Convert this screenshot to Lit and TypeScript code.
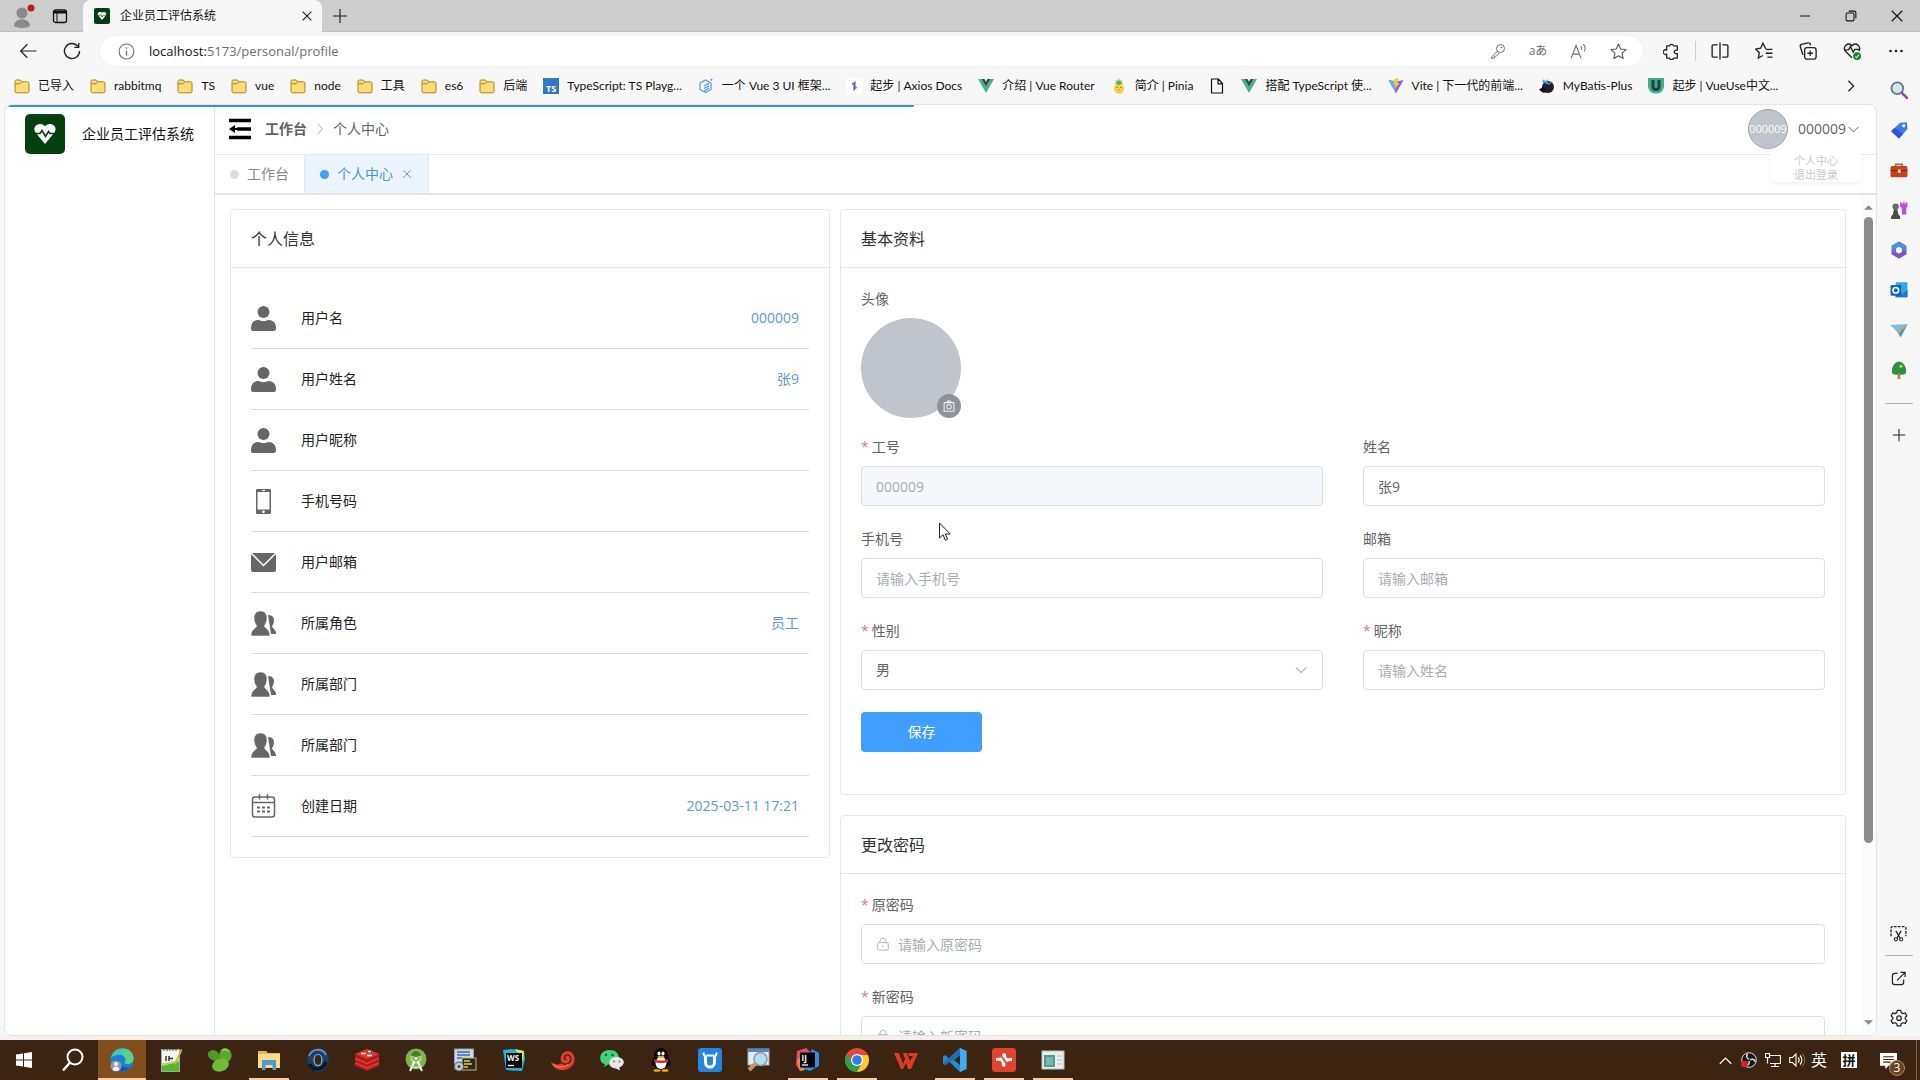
import { LitElement, html, css, svg, nothing, type TemplateResult, type SVGTemplateResult } from "lit";
import { customElement } from "lit/decorators.js";
import { classMap } from "lit/directives/class-map.js";

/* ---------- shared pieces ---------- */

const base = css`
  * { box-sizing: border-box; }
  button { border: 0; padding: 0; margin: 0; background: none; font: inherit; color: inherit; display: flex; align-items: center; justify-content: center; cursor: default; }
  a { color: inherit; text-decoration: none; }
  svg { display: block; flex: none; }
  h1, h2, p, ul, ol { margin: 0; padding: 0; font-weight: 400; list-style: none; }
`;

const icon = (size: number, content: SVGTemplateResult, box = 16) =>
  html`<svg width=${size} height=${size} viewBox="0 0 ${box} ${box}" fill="none" aria-hidden="true">${content}</svg>`;

const heartLogo = svg`<rect width="40" height="40" rx="5" fill="#04400c"/>
  <path d="M20 30 10.500 18.500C7.500 14 11 10 15 10c2.500 0 4 1 5 2.500C21 11 22.500 10 25 10c4 0 7.500 4 4.500 8.500Z" fill="#fff"/>
  <path d="M8 19.500h7l2-3 3.500 6 3-5 1.500 2h7" stroke="#04400c" stroke-width="1.600"/>`;

const plus = svg`<path d="M8 1v14M1 8h14" stroke="#222" stroke-width="1.200"/>`;
const cross = svg`<path d="m3 3 10 10M13 3 3 13" stroke="currentColor" stroke-width="1.200"/>`;

/* ---------- browser frame: tab strip and address bar ---------- */

@customElement("browser-chrome")
class BrowserChrome extends LitElement {
  static styles = [base, css`
    :host { display: block; background: #f7f7f7; font-size: 12px; line-height: 16px; color: #111; }
    .tabs { display: flex; align-items: stretch; height: 32px; background: #cdcdcd; border-bottom: 1px solid #bdbdbd; }
    .lead { display: flex; align-items: center; gap: 16px; width: 83px; padding-left: 12px; }
    .tab { display: flex; align-items: center; width: 239px; height: 32px; padding: 0 8px 0 11px; gap: 10px; background: #f7f7f7; border-radius: 8px 8px 0 0; }
    .tab h1 { flex: 1; font-size: 12px; }
    .new { width: 36px; }
    .window { display: flex; margin-left: auto; }
    .window button { width: 46px; }
    .bar { display: flex; align-items: center; height: 38px; padding-right: 2px; }
    .nav { width: 44px; height: 30px; }
    .nav:first-child { margin-left: 6px; }
    .url { flex: 1; display: flex; align-items: center; height: 30px; margin: 0 6px; padding: 0 15px 0 18px; gap: 14px; background: #fff; border-radius: 15px; color: #6d6d6d; box-shadow: 0 0 2px #e4e4e4; }
    .address { flex: 1; font-family: "Open Sans", sans-serif; font-size: 13px; line-height: 20px; }
    .address b { font-weight: 400; color: #111; }
    .quick { display: flex; gap: 20px; }
    .quick button { width: 20px; }
    .tools { display: flex; align-items: center; }
    .tools button { width: 44px; height: 30px; }
    .sep { width: 1px; height: 20px; margin: 0 2px; background: #d0d0d0; }
  `];

  render() {
    return html`
      <div class="tabs">
        <div class="lead">
          <button aria-label="用户">${icon(24, svg`<circle cx="10" cy="9" r="5.500" fill="#8a8a8a"/><path d="M2 22c0-9 16-9 16 0-3 2.500-13 2.500-16 0Z" fill="#8a8a8a"/><circle cx="19" cy="4" r="3.500" fill="#b81d1d"/>`, 24)}</button>
          <button aria-label="标签页">${icon(16, svg`<rect x="1.500" y="2" width="13" height="12.500" rx="2" stroke="#111" stroke-width="1.300"/><path d="M1.500 3h13v2.500h-13Z" fill="#111"/><path d="M5 5v9" stroke="#111"/>`)}</button>
        </div>
        <div class="tab">${icon(16, heartLogo, 40)}<h1>企业员工评估系统</h1><button aria-label="关闭标签">${icon(14, cross)}</button></div>
        <button class="new" aria-label="新建标签">${icon(16, plus)}</button>
        <div class="window">
          <button aria-label="最小化">${icon(10, svg`<path d="M0 8h16" stroke="#111" stroke-width="1.600"/>`)}</button>
          <button aria-label="还原">${icon(12, svg`<rect x="1.500" y="4" width="10.500" height="10.500" rx="1.500" stroke="#111" stroke-width="1.400"/><path d="M5 1.500h7a2.500 2.500 0 0 1 2.500 2.500v7" stroke="#111" stroke-width="1.400"/>`)}</button>
          <button aria-label="关闭">${icon(14, svg`<path d="m2 2 12 12M14 2 2 14" stroke="#111" stroke-width="1.300"/>`)}</button>
        </div>
      </div>
      <div class="bar">
        <button class="nav" aria-label="后退">${icon(18, svg`<path d="M15.500 8H1.500m6-6-6 6 6 6" stroke="#222" stroke-width="1.100"/>`)}</button>
        <button class="nav" aria-label="刷新">${icon(18, svg`<path d="M13.200 3.800A6.700 6.700 0 1 0 14.700 8M14 .8v4H10" stroke="#222" stroke-width="1.200"/>`)}</button>
        <div class="url">
          ${icon(17, svg`<circle cx="8" cy="8" r="7" stroke="#6d6d6d"/><path d="M8 7v5M8 4v1.500" stroke="#6d6d6d" stroke-width="1.200"/>`)}
          <a class="address" href="#"><b>localhost:</b>5173/personal/profile</a>
          <div class="quick">
            <button aria-label="密码">${icon(16, svg`<circle cx="10.500" cy="5.500" r="4" stroke="#707070"/><path d="m7.500 8-6 6v1.200h2.800v-2h2l3-3.500" stroke="#707070"/><circle cx="11.500" cy="4.500" r=".8" fill="#707070"/>`)}</button>
            <button aria-label="翻译">aあ</button>
            <button aria-label="朗读">${icon(17, svg`<path d="m1 14.500 4.700-12 4.800 12M2.700 10.500h6" stroke="#707070" stroke-width="1.100"/><path d="M10 3c1 1 1.200 2.500.5 3.500M12.500 1c2 2 2 5 .8 7" stroke="#707070"/>`)}</button>
            <button aria-label="收藏">${icon(17, svg`<path d="m8 1 2.100 4.700 5 .5-3.800 3.400 1.100 5L8 12l-4.400 2.600 1.100-5L.9 6.200l5-.5Z" stroke="#555" stroke-linejoin="round"/>`)}</button>
          </div>
        </div>
        <div class="tools">
          <button aria-label="扩展">${icon(17, svg`<path d="M3.500 2.700h2.600a2 2 0 0 1 3.800 0h3.600v4h-.8a1.700 1.700 0 1 0 0 3.300h.8v4.300H9.900a2 2 0 0 1-3.800 0H3.500V10.500a2.200 2.200 0 1 1 0-3.800Z" stroke="#222" stroke-width="1.200" stroke-linejoin="round"/>`)}</button>
          <i class="sep"></i>
          <button aria-label="分屏">${icon(18, svg`<path d="M6 2.500H2c-.6 0-1 .4-1 1v9c0 .6.400 1 1 1h4m4-11h4c.6 0 1 .4 1 1v9c0 .6-.4 1-1 1h-4M8 .5v15" stroke="#222" stroke-width="1.200"/>`)}</button>
          <button aria-label="收藏夹">${icon(18, svg`<path d="M9.500 6 7 1 5 5.500l-4.500.7 3.300 3.300-.8 4.700L7 12M9.500 6.500H15.500M9.500 10H15.500M11 13.500h4.500" stroke="#222" stroke-width="1.200"/>`)}</button>
          <button aria-label="集锦">${icon(18, svg`<rect x="5" y="5" width="10.200" height="10.200" rx="2" stroke="#222" stroke-width="1.200"/><path d="M10 7.500v5M7.500 10h5M3.500 11.500 1.200 4.200c-.3-1 .2-1.800 1-2.100L8 .8c1-.2 1.800.2 2 1l.3 1.200" stroke="#222" stroke-width="1.200"/>`)}</button>
          <button aria-label="性能">${icon(18, svg`<path d="M8 14 2 8C-.5 4.500 4.500-1 8 3.500 11.500-1 16.500 4.500 14 8M1 7h4l1.500-3 2.500 5 1.500-2.500h4" stroke="#222" stroke-width="1.200"/><circle cx="12.500" cy="12.500" r="3.500" fill="#168031"/><path d="m11 13 1 1 2-2.500" stroke="#fff"/>`)}</button>
          <button aria-label="设置及更多">${icon(16, svg`<circle cx="2.500" cy="8" r="1.300" fill="#222"/><circle cx="8" cy="8" r="1.300" fill="#222"/><circle cx="13.500" cy="8" r="1.300" fill="#222"/>`)}</button>
        </div>
      </div>`;
  }
}

/* ---------- bookmarks ---------- */

const folder = svg`<path d="M1 3.500C1 2.500 1.500 2 2.500 2h3.700l1.600 1.800h5.700c1 0 1.500.5 1.500 1.500v8c0 1-.5 1.500-1.500 1.500h-11C1.500 14.800 1 14.300 1 13.300Z" fill="#fbdc77" stroke="#a98325"/><path d="M1.500 5.800h4.300l2-2" stroke="#a98325"/>`;
const tsLogo = svg`<rect width="16" height="16" fill="#3178c6"/><text x="3" y="14" font-family="Open Sans, sans-serif" font-size="9" font-weight="700" fill="#fff">TS</text>`;
const hexLogo = svg`<path d="m7.500 2 5.500 3v6.500l-5.500 3-5.500-3V5Z" stroke="#4f97e8" stroke-width="1.200"/><path d="m6 8 5-2.600M6 10.500l5-2.600M6 13l5-2.600" stroke="#4f97e8" stroke-width="1.200"/><circle cx="13.500" cy="1.800" r="1" fill="#4f97e8"/>`;
const axiosLogo = svg`<rect width="16" height="16" fill="#fff"/><path d="M9.500 2.500v8l-2 3v-8Z" fill="#6b3fd4"/><path d="m5.500 6 2-2v3Zm5.500 3.500-1.500 2v-3Z" fill="#6b3fd4"/>`;
const vueLogo = svg`<path d="M0 1h3.500L8 8.800 12.500 1H16L8 15Z" fill="#41b883"/><path d="M3.500 1h3L8 3.800 9.500 1h3L8 8.800Z" fill="#34495e"/>`;
const piniaLogo = svg`<ellipse cx="8" cy="10.500" rx="5" ry="5.300" fill="#f8cf45"/><path d="M3.500 5 6 4.500 4.500 2l2.700 1L8 0l.8 3 2.700-1L10 4.500l2.500.5L8 7Z" fill="#5bb54a"/><path d="M5.500 9.500h1M9.500 9.500h1M7.500 12h1" stroke="#7a4a10"/>`;
const docLogo = svg`<path d="M2.500 1h6.800L13.500 5.500V15h-11Zm6.500 0v4.800h4.500" stroke="#111" stroke-width="1.200" stroke-linejoin="round"/>`;
const viteLogo = svg`<path d="M.5 2 8 15.500 15.500 2 8 3.500Z" fill="#8a62f0"/><path d="M.5 2 8 15.500 6 3Z" fill="#58b5f5"/><path d="m10.500 0-4.300 1.200-.4 6h1.700l-.5 4 4.300-6H9.500Z" fill="#ffc928"/>`;
const mybatisLogo = svg`<circle cx="9" cy="9" r="6" fill="#231f2a"/><path d="M0 11c2 0 3-1 4-3l4 6c-3 2-6 0-8-3Z" fill="#111"/><path d="M3 4 5 1l1 3 3-3v4l4-1-3 3Z" fill="#3d8fdc"/>`;
const vueuseLogo = svg`<path d="M0 0h16v8c0 10-16 10-16 0Z" fill="#3fae85"/><path d="M5 2v6.500c0 4 6 4 6 0V2" stroke="#22404b" stroke-width="3"/>`;

const bookmarks: [SVGTemplateResult, string][] = [
  [folder, "已导入"], [folder, "rabbitmq"], [folder, "TS"], [folder, "vue"], [folder, "node"],
  [folder, "工具"], [folder, "es6"], [folder, "后端"],
  [tsLogo, "TypeScript: TS Playg..."], [hexLogo, "一个 Vue 3 UI 框架..."], [axiosLogo, "起步 | Axios Docs"],
  [vueLogo, "介绍 | Vue Router"], [piniaLogo, "简介 | Pinia"], [docLogo, ""],
  [vueLogo, "搭配 TypeScript 使..."], [viteLogo, "Vite | 下一代的前端..."],
  [mybatisLogo, "MyBatis-Plus"], [vueuseLogo, "起步 | VueUse中文..."],
];

@customElement("bookmark-bar")
class BookmarkBar extends LitElement {
  static styles = [base, css`
    :host { box-sizing: border-box; display: flex; align-items: center; height: 34px; padding: 0 19px 2px 10px; gap: 16px; font-family: Lato, "Noto Sans CJK SC", sans-serif; font-size: 12px; line-height: 18px; color: #111; }
    a { display: flex; align-items: center; gap: 8px; white-space: nowrap; }
    .more { margin-left: auto; }
  `];
  render() {
    return html`
      ${bookmarks.map(([glyph, name]) => html`<a href="#">${icon(16, glyph)}${name ? html`<span>${name}</span>` : nothing}</a>`)}
      <button class="more" aria-label="更多书签">${icon(14, svg`<path d="m5 2 6 6-6 6" stroke="#222" stroke-width="1.500"/>`)}</button>`;
  }
}

/* ---------- browser sidebar ---------- */

const railIcons: [string, SVGTemplateResult][] = [
  ["搜索", svg`<path d="m11 11 4 4" stroke="#9b3fc4" stroke-width="2.400" stroke-linecap="round"/><circle cx="6.500" cy="6.500" r="5.200" fill="#cfe6f5" stroke="#6e7478" stroke-width="1.600"/>`],
  ["购物", svg`<path d="m9 1.500 6-.5.500 6L8 15.500 1 9Z" fill="#3d78ee"/><path d="m1 9 7 6.500 3.500-3.900L4 6Z" fill="#2f52cf"/><circle cx="12.200" cy="4.200" r="1.500" fill="#f5e9a0"/>`],
  ["工具", svg`<path d="M5 5V3h6v2" stroke="#8c6b5c" stroke-width="1.400"/><rect x=".5" y="4.500" width="15" height="10" rx="1.500" fill="#bf4419"/><path d="M.5 8.500h15" stroke="#8c2b0c"/><rect x="7" y="7.500" width="2.500" height="3" fill="#f7d9c5"/>`],
  ["游戏", svg`<path d="M9 1h1.500v1.500h1V1H13v1.500h1V1h1.500v4l-1 1v6h-4V6L9 5Z" fill="#b552dd"/><circle cx="5" cy="5" r="2.800" fill="#6a6a6c"/><path d="M3.500 7.500h3l1 4.500L9 13.500V16H1v-2.500L2.500 12Z" fill="#4a4a4c"/>`],
  ["Microsoft 365", svg`<path d="M8 .5 1.500 4.200v7.600L8 15.500l6.500-3.700V4.200Z" fill="#6a6fd8"/><path d="M8 .5 1.500 4.200v5L8 5l6.500 3V4.200Z" fill="#4f8fe0"/><path d="M1.500 9.500v2.300L8 15.500l6.500-3.700V8L8 11.500Z" fill="#8a52b8"/><path d="m8 5.200 2.600 1.500v3L8 11 5.400 9.700v-3Z" fill="#f7f7f7"/>`],
  ["Outlook", svg`<rect x="5" y="1" width="10.500" height="13.500" rx="1" fill="#35a8e8"/><path d="m5 8 5.300 4 5.200-4v6.500H5Z" fill="#1a77cc"/><rect x=".5" y="3.500" width="9.500" height="9.500" rx="1" fill="#0f64b8"/><circle cx="5.200" cy="8.200" r="2.500" stroke="#fff" stroke-width="1.400"/>`],
  ["投递", svg`<path d="M.5 3.500 15.500 3 9.500 14.500 6 9Z" fill="#3b98d8"/><path d="M.5 3.500 15.500 3 6 9Z" fill="#7cbfe6"/><path d="m6 9 9.500-6L7.500 11.500Z" fill="#d8a84a"/>`],
  ["游戏树", svg`<path d="M8 .5c5 0 8 9 5.500 11-2 1-9 1-11 0C0 9.500 3 .5 8 .5Z" fill="#2f9140"/><path d="M6.800 11h2.400v5H6.800Z" fill="#b9852f"/><path d="m9.500 3 2 1.500L10 6.500 8 5Z" fill="#c8d84a"/>`],
];

@customElement("side-rail")
class SideRail extends LitElement {
  static styles = [base, css`
    :host { display: flex; flex-direction: column; align-items: center; }
    button { width: 43px; height: 40px; }
    hr { width: 28px; margin: 13px 0 11px; border: 0; border-top: 1px solid #b5b5b5; }
    .foot { margin-top: auto; display: flex; flex-direction: column; align-items: center; gap: 4px; }
    .foot hr { margin: 0; }
    .foot button { height: 36px; }
  `];
  render() {
    return html`
      ${railIcons.map(([name, glyph]) => html`<button aria-label=${name}>${icon(18, glyph)}</button>`)}
      <hr />
      <button aria-label="添加">${icon(14, plus)}</button>
      <div class="foot">
        <button aria-label="截图">${icon(17, svg`<path d="M1 10.500V3c0-1 .5-1.500 1.500-1.500h11c1 0 1.500.5 1.500 1.500v7.500" stroke="#222" stroke-width="1.300" stroke-dasharray="2.500 1.200"/><path d="m5.500 5.500 4 7M10.500 5.500l-4 7" stroke="#222" stroke-width="1.200"/><circle cx="5.500" cy="13.500" r="1.500" stroke="#222"/><circle cx="10.500" cy="13.500" r="1.500" stroke="#222"/>`)}</button>
        <hr />
        <button aria-label="在新窗口打开">${icon(15, svg`<path d="M7 2.500H4A2.500 2.500 0 0 0 1.500 5v7A2.500 2.500 0 0 0 4 14.500h7a2.500 2.500 0 0 0 2.500-2.500V9M10 1.500h5v5M15 1.500 6.500 10" stroke="#222" stroke-width="1.300"/>`)}</button>
        <button aria-label="设置">${icon(18, svg`<path d="m6.500 1.200 3 0 .5 2 1.500.9 2-.6 1.500 2.500-1.500 1.500v1.300l1.500 1.500-1.500 2.500-2-.6-1.500.9-.5 2h-3L6 13.100l-1.500-.9-2 .6L1 10.300l1.500-1.500V7.500L1 6l1.500-2.500 2 .6L6 3.200Z" stroke="#222" stroke-width="1.100" stroke-linejoin="round"/><circle cx="8" cy="8.200" r="2" stroke="#222" stroke-width="1.100"/>`)}</button>
      </div>`;
  }
}

/* ---------- profile page ---------- */

const userIcon = svg`<circle cx="12.500" cy="6" r="6" fill="#666"/><path d="M0 22c0-5 3-8 7.500-8 3 1.500 7 1.500 10 0 4.500 0 7.500 3 7.500 8 0 2-.5 3-2 3H2c-1.500 0-2-1-2-3Z" fill="#666"/>`;
const phoneIcon = svg`<path fill-rule="evenodd" d="M6.500 0h12c1 0 1.500.5 1.500 1.500v22c0 1-.5 1.500-1.500 1.500h-12C5.500 25 5 24.500 5 23.500v-22C5 .5 5.500 0 6.500 0ZM6.500 3v17.500h12V3Z" fill="#666"/><circle cx="12.500" cy="22.800" r="1.300" fill="#fff"/><path d="M11 1.500h3" stroke="#fff"/>`;
const mailIcon = svg`<rect y="3" width="25" height="19" rx="2" fill="#666"/><path d="m0 3 12.500 12.500L25 3" stroke="#fff" stroke-width="1.500"/>`;
const groupIcon = svg`<path d="M17 4c5 0 6.500 3 5.800 7-.3 1.500-1 3-1.800 4 0 2.500 4 3 4 8H20Z" fill="#666"/><path d="M9.500 0C14 0 16.200 3 16 7c0 3-1 6-2.500 7.500 0 3 5.500 3 5.500 10.500H0c0-7.500 5.500-7.500 5.500-10.500C4 13 3 10 3 7c0-4 2-7 6.500-7Z" fill="#666" stroke="#fff" stroke-width=".6"/>`;
const calendarIcon = svg`<rect x="1.500" y="3" width="22" height="20" rx="2.500" stroke="#666" stroke-width="1.500"/><path d="M1.500 8.500h22M8.500 0v5.500M16.500 0v5.500" stroke="#666" stroke-width="1.500"/><path d="M6 13.500h3m2 0h3m2 0h3M6 17.500h3m2 0h3m2 0h3" stroke="#666" stroke-width="2"/>`;

const facts: [SVGTemplateResult, string, string][] = [
  [userIcon, "用户名", "000009"],
  [userIcon, "用户姓名", "张9"],
  [userIcon, "用户昵称", ""],
  [phoneIcon, "手机号码", ""],
  [mailIcon, "用户邮箱", ""],
  [groupIcon, "所属角色", "员工"],
  [groupIcon, "所属部门", ""],
  [groupIcon, "所属部门", ""],
  [calendarIcon, "创建日期", "2025-03-11 17:21"],
];

const chevronDown = svg`<path d="m2 5 6 6 6-6" stroke="currentColor" stroke-width="1.200"/>`;
const lockIcon = svg`<rect x="2" y="6.500" width="12" height="8.500" rx="1" stroke="#a8abb2"/><path d="M4.500 6.500V5c0-5 7-5 7 0v1.500M8 9.500v2.500" stroke="#a8abb2"/>`;

@customElement("profile-page")
class ProfilePage extends LitElement {
  static styles = [base, css`
    :host { position: relative; display: flex; min-width: 0; min-height: 0; overflow: hidden; background: #fff; border: 1px solid #e4e4e4; border-radius: 8px; color: #606266; font-family: "Open Sans", "Noto Sans CJK SC", sans-serif; font-size: 14px; line-height: 22px; }
    .progress { position: absolute; z-index: 2; top: -1px; left: 3px; width: 48.4%; height: 3px; background: #3d93bd; border-radius: 2px; box-shadow: 0 0 10px #bdeaff; }
    .side { flex: none; width: 210px; border-right: 1px solid #e4e4e4; color: #111; }
    .brand { display: flex; align-items: center; gap: 17px; padding: 9px 0 0 20px; white-space: nowrap; }
    .app { flex: 1; min-width: 0; display: flex; flex-direction: column; }
    header { display: flex; align-items: center; height: 50px; padding: 0 16px 1px 13px; border-bottom: 1px solid #e8e8e8; }
    .crumbs { display: flex; align-items: center; gap: 7px; margin-left: 13px; }
    .account { position: relative; margin-left: auto; display: flex; align-items: center; gap: 10px; }
    .account button { gap: 1px; }
    .face { display: grid; place-items: center; width: 40px; height: 40px; border-radius: 50%; background: #c0c4cc; border: 1px solid #a0a3a8; color: #fff; font-size: 11px; }
    .menu { position: absolute; z-index: 1; top: 45px; right: -1px; width: 90px; background: #fff; border-radius: 0 0 4px 4px; box-shadow: 0 2px 4px #f0f0f0; color: #ccc; font-size: 11px; line-height: 14px; text-align: center; }
    .tabs { display: flex; height: 40px; border-bottom: 2px solid #e4e4e4; }
    .tabs a { display: flex; align-items: center; gap: 8px; padding: 0 15px; border-right: 1px solid #e4e7ed; color: #888; }
    .tabs i { width: 9px; height: 9px; border-radius: 50%; background: #ddd; }
    .tabs .on { background: #ecf5ff; color: #4a96d9; }
    .tabs .on i { background: #409eff; }
    .scroll { flex: 1; min-height: 0; display: flex; }
    .grid { flex: 1; min-width: 0; min-height: 0; overflow: hidden; display: grid; grid-template-columns: calc(37.5% - 6px) 1fr; gap: 10px; align-items: start; padding: 14px 15px; }
    .stack { display: grid; gap: 20px; }
    .card { border: 1px solid #e4e7ed; border-radius: 4px; }
    .card h2 { padding: 18px 20px 17px; font-size: 16px; line-height: 22px; color: #303133; border-bottom: 1px solid #e4e4e4; }
    .body { padding: 20px; }
    .facts li { display: flex; align-items: center; height: 61px; padding-right: 10px; border-bottom: 1px solid #dcdcdc; color: #222; }
    .facts span { margin-left: 25px; }
    .facts b { margin-left: auto; font-weight: 400; color: #5a9bd0; }
    form { display: grid; grid-template-columns: 1fr 1fr; gap: 22px 40px; }
    .wide { grid-column: 1 / -1; }
    .field { display: flex; flex-direction: column; gap: 8px; }
    .need::before { content: "*"; margin-right: 3px; color: #d9797f; }
    .box { display: flex; align-items: center; gap: 8px; height: 40px; padding: 0 14px; border: 1px solid #dcdfe6; border-radius: 4px; color: #a8abb2; }
    .box.off { background: #f5f7fa; }
    .box input, .box select { flex: 1; min-width: 0; height: 100%; padding: 0; border: 0; outline: 0; background: none; appearance: none; font: inherit; color: #606266; }
    .box input::placeholder, .off input { color: #a8abb2; -webkit-text-fill-color: #a8abb2; opacity: 1; }
    .photo { display: flex; flex-direction: column; gap: 8px; margin-bottom: -4px; }
    .avatar { position: relative; width: 100px; height: 100px; border-radius: 50%; background: #c0c4cc; }
    .avatar button { position: absolute; right: 0; bottom: 0; width: 24px; height: 24px; border-radius: 50%; background: #8f9299; }
    .basic { padding-bottom: 42px; }
    .save { width: 121px; height: 40px; border-radius: 4px; background: #409eff; color: #fff; }
    .bar { display: flex; flex-direction: column; align-items: center; width: 15px; padding: 8px 0; gap: 5px; background: #fcfcfc; }
    .bar i { width: 9px; height: 76%; border-radius: 5px; background: #8b8b8b; }
    .bar svg:last-child { margin-top: auto; }
  `];

  private field(id: string, label: string, hint: string, opts: { value?: string; need?: boolean; off?: boolean; secret?: boolean; wide?: boolean } = {}): TemplateResult {
    return html`<div class=${classMap({ field: true, wide: !!opts.wide })}>
      <label for=${id} class=${classMap({ need: !!opts.need })}>${label}</label>
      <div class=${classMap({ box: true, off: !!opts.off })}>
        ${opts.secret ? icon(14, lockIcon) : nothing}
        <input id=${id} type=${opts.secret ? "password" : "text"} placeholder=${hint} .value=${opts.value ?? ""} ?disabled=${!!opts.off} autocomplete="off" />
      </div>
    </div>`;
  }

  render() {
    return html`
      <div class="progress"></div>
      <aside class="side"><div class="brand">${icon(40, heartLogo, 40)}<span>企业员工评估系统</span></div></aside>
      <div class="app">
        <header>
          <button aria-label="折叠菜单">${icon(24, svg`<path d="M1 3.500h22M9 12h14M1 20.500h22" stroke="#000" stroke-width="3.500"/><path d="M1 12l6-4v8Z" fill="#000"/><path d="M6 12h4" stroke="#000" stroke-width="2"/>`, 24)}</button>
          <nav class="crumbs"><a href="#"><strong>工作台</strong></a>${icon(12, svg`<path d="m5 1 6 7-6 7" stroke="#a8abb2" stroke-width="1.300"/>`)}<span>个人中心</span></nav>
          <div class="account">
            <span class="face">000009</span>
            <button>000009${icon(13, chevronDown)}</button>
            <ul class="menu"><li>个人中心</li><li>退出登录</li></ul>
          </div>
        </header>
        <nav class="tabs">
          <a href="#"><i></i>工作台</a>
          <a href="#" class="on"><i></i>个人中心<button aria-label="关闭">${icon(12, cross)}</button></a>
        </nav>
        <div class="scroll">
          <main class="grid">
            <section class="card">
              <h2>个人信息</h2>
              <div class="body"><ul class="facts">
                ${facts.map(([glyph, name, value]) => html`<li>${icon(25, glyph, 25)}<span>${name}</span><b>${value}</b></li>`)}
              </ul></div>
            </section>
            <div class="stack">
              <section class="card">
                <h2>基本资料</h2>
                <div class="body basic">
                  <form @submit=${(e: Event) => e.preventDefault()}>
                    <div class="photo wide"><span>头像</span><div class="avatar"><button type="button" aria-label="更换头像">${icon(12, svg`<path d="M1.500 3.500h13V15h-13ZM5 3.500l1-2h4l1 2" stroke="#eceef2" stroke-width="1.400"/><circle cx="8" cy="9" r="3" stroke="#eceef2" stroke-width="1.400"/>`)}</button></div></div>
                    ${this.field("code", "工号", "", { value: "000009", need: true, off: true })}
                    ${this.field("name", "姓名", "请输入姓名", { value: "张9" })}
                    ${this.field("phone", "手机号", "请输入手机号")}
                    ${this.field("mail", "邮箱", "请输入邮箱")}
                    <div class="field"><label class="need" for="sex">性别</label><div class="box"><select id="sex"><option>男</option><option>女</option></select>${icon(14, chevronDown)}</div></div>
                    ${this.field("nick", "昵称", "请输入姓名", { need: true })}
                    <button class="save">保存</button>
                  </form>
                </div>
              </section>
              <section class="card">
                <h2>更改密码</h2>
                <div class="body"><form>
                  ${this.field("old", "原密码", "请输入原密码", { need: true, secret: true, wide: true })}
                  ${this.field("fresh", "新密码", "请输入新密码", { need: true, secret: true, wide: true })}
                </form></div>
              </section>
            </div>
          </main>
          <div class="bar">${icon(9, svg`<path d="M0 12 8 4l8 8Z" fill="#8a8a8a"/>`)}<i></i>${icon(9, svg`<path d="m0 4 8 8 8-8Z" fill="#8a8a8a"/>`)}</div>
        </div>
      </div>`;
  }
}

/* ---------- taskbar ---------- */

type App = { name: string; glyph: SVGTemplateResult; open?: boolean; active?: boolean };
const apps: App[] = [
  { name: "开始", glyph: svg`<path d="m4 6.500 7-1v6H4Zm8-1.200L20 4v7.500h-8ZM4 12.500h7v6l-7-1Zm8 0h8V20l-8-1.200Z" fill="#fff"/>` },
  { name: "搜索", glyph: svg`<circle cx="14" cy="9" r="7.500" stroke="#fff" stroke-width="2"/><path d="m9 14.500-7 8" stroke="#fff" stroke-width="2.400"/>` },
  { name: "Edge", active: true, glyph: svg`<circle cx="12" cy="12" r="11.500" fill="#1a7fd0"/><path d="M1 10C3-3 23-3 23.500 10c.5 6-6 7-9 5 3-5-1-8-5-8-4 0-7 1-8.500 3Z" fill="#41c9b8"/><path d="M13 2c6 0 10 3 10.500 8 .5 6-6 7-9 5 2-3 1-5 0-6Z" fill="#5fd37a" opacity=".8"/><path d="M8 12c0 5 6 9 12 7-3 5-10 6-15 2-3-4-1-9 3-9Z" fill="#1459a8"/><circle cx="6" cy="18" r="5.500" fill="#8f9ba8"/><circle cx="6" cy="16" r="2" fill="#f2f2f2"/><path d="M2.500 21.500c1-4 6-4 7 0-2 2-5 2-7 0Z" fill="#f2f2f2"/>` },
  { name: "Notepad++", glyph: svg`<rect x="2.500" y="1.500" width="18" height="22" fill="#f4f6f0" stroke="#9aa"/><path d="M3 17 20 13v10H3Z" fill="#58b52c"/><path d="M3 15.500 20 12v2L3 18Z" fill="#a9dc7c"/><path d="M5 1v2m3-2v2m3-2v2m3-2v2m3-2v2" stroke="#555"/><path d="M7 8v5M10 8v5m0-2.500h4" stroke="#333" stroke-width="1.500"/><path d="m23.500 2-6 13-2 2 .5-3.500L22 1Z" fill="#e0a93b"/>` },
  { name: "终端", glyph: svg`<ellipse cx="17.500" cy="7" rx="6" ry="7" transform="rotate(-15 17.500 7)" fill="#5aa82c"/><ellipse cx="6" cy="7.500" rx="6.500" ry="5" transform="rotate(30 6 7.500)" fill="#4f9a24"/><ellipse cx="12.500" cy="17" rx="8.500" ry="6.500" transform="rotate(-20 12.500 17)" fill="#6fbb38"/><path d="M14 2.500c2-1.500 5-1 6.500 1" stroke="#9ad968" stroke-width="1.500"/>` },
  { name: "文件资源管理器", open: true, glyph: svg`<path d="M1 3h8l2 2h12v15H1Z" fill="#e8b64a"/><path d="M1 6h22v14H1Z" fill="#fbdc86"/><path d="M5 12h14v10h-3.500v-5h-7v5H5Z" fill="#4a9bd8"/>` },
  { name: "Navicat", glyph: svg`<ellipse cx="12" cy="12" rx="7.300" ry="8.500" stroke="#1d3f63" stroke-width="7"/><path d="M3 8c3-8 14-8 17-1" stroke="#5f92c0" stroke-width="2"/><path d="M3.500 16c4 8 14 6 16.500-2" stroke="#0b1726" stroke-width="3.500"/><ellipse cx="12" cy="12" rx="4" ry="5.500" stroke="#8fb9dc" stroke-width="1.200"/>` },
  { name: "Redis", glyph: svg`<path d="m12 1 12 5v12l-12 5L0 18V6Z" fill="#a51f1c"/><path d="m12 1 12 5-12 5L0 6Z" fill="#e0352f"/><path d="m0 10.500 12 5 12-5M0 15l12 5 12-5" stroke="#e0352f" stroke-width="2"/><path d="M6 5.500h5m1 2h5m-4-4h3" stroke="#fff" stroke-width="1.500"/>` },
  { name: "Android Studio", glyph: svg`<circle cx="12" cy="11" r="10.500" fill="#7fb24a"/><circle cx="12" cy="10" r="6" fill="#a9cf6f"/><path d="M7 8a5 5 0 0 1 10 0Z" fill="#4e7a35"/><path d="M11 12 6 23M13 12l5 11" stroke="#f2f2f2" stroke-width="2"/><path d="M7 17.500c3 2.500 7 2.500 10 0" stroke="#ddd" stroke-width="1.500"/><circle cx="12" cy="10.500" r="2.300" fill="#eee" stroke="#5c7a44"/>` },
  { name: "服务器", glyph: svg`<rect x="1.500" y="1" width="19" height="20" fill="#cdd9e6" stroke="#8da2b8"/><path d="M4 4h13M4 7h13M4 10h5" stroke="#3e67b0" stroke-width="1.500"/><rect x="9" y="10" width="14" height="12" fill="#2b2b20" stroke="#c2b27a"/><path d="M11 13h6m-6 3h8m-8 3h4" stroke="#e4d03a" stroke-width="1.500"/><circle cx="6" cy="18.500" r="4.500" fill="#c4c9ce" stroke="#555"/><circle cx="6" cy="18.500" r="1.500" fill="#444"/>` },
  { name: "WebStorm", glyph: svg`<path d="m1 2 9-1 12 2 1 8-3 12-16-1Z" fill="#1fb5de"/><path d="m13 1 9 2-1 10Z" fill="#d8ea50"/><rect x="4" y="5" width="16" height="15" fill="#000"/><text x="5" y="13" font-family="Open Sans, sans-serif" font-size="8" font-weight="700" fill="#fff">WS</text><path d="M6 17.500h6" stroke="#fff" stroke-width="1.300"/>` },
  { name: "Nacos", glyph: svg`<path d="M0 14c3 3 8 3 11 1-3-4-1-11 5-12 5 0 8 4 7.500 9C23 19 16 23 9 22 4 21 1 18 0 14Z" fill="#d8402f"/><path d="M11 15c4 3 9 0 9-4 0-3-3-5-5.500-3.500-2 1.500-1 4 1 4" stroke="#4a1a10" stroke-width="1.200"/><path d="M2 16c4 4 11 4 16 0" stroke="#f0705a" stroke-width="1.500"/>` },
  { name: "微信", glyph: svg`<path d="M9.500 2C-2 2-2 15 5 16l-1 3 4-2.500C22 17 22 2 9.500 2Z" fill="#3fd37a"/><circle cx="6" cy="7" r="1.300" fill="#176b38"/><circle cx="12.500" cy="7" r="1.300" fill="#176b38"/><path d="M16.500 9C7 9 7 20.500 16 20.500l4 2-.7-3C27 16 24 9 16.500 9Z" fill="#e8e8e8"/><circle cx="14" cy="13.500" r="1" fill="#777"/><circle cx="19.500" cy="13.500" r="1" fill="#777"/>` },
  { name: "QQ", glyph: svg`<path d="M12 0c5 0 7 4 7 9 2 3 3 6 2 9l-2-1c-3 6-11 6-14 0l-2 1c-1-3 0-6 2-9 0-5 2-9 7-9Z" fill="#0c0c10"/><ellipse cx="12" cy="15" rx="5.500" ry="6" fill="#fff"/><path d="M5 11c4 2 10 2 14 0v2.500c-4 2-10 2-14 0Z" fill="#d7262b"/><ellipse cx="10" cy="5.500" rx="1.500" ry="2" fill="#fff"/><ellipse cx="14" cy="5.500" rx="1.500" ry="2" fill="#fff"/><ellipse cx="12" cy="9" rx="3.500" ry="1.200" fill="#f4a825"/><ellipse cx="8" cy="22.500" rx="3.500" ry="1.300" fill="#f4a825"/><ellipse cx="16" cy="22.500" rx="3.500" ry="1.300" fill="#f4a825"/>` },
  { name: "U 助手", glyph: svg`<rect width="24" height="24" rx="3" fill="#2586e0"/><path d="M7.500 8.500v6c0 6 9 6 9 0v-6" stroke="#fff" stroke-width="3"/><path d="M5.500 4.500c0 2.500 1 4 3 4M18.500 4.500c0 2.500-1 4-3 4" stroke="#fff" stroke-width="2"/><path d="M8 7.500h8" stroke="#fff" stroke-width="2"/>` },
  { name: "放大镜", glyph: svg`<rect x="1" y="1" width="21" height="16" fill="#e2ebf3" stroke="#9eb2c4"/><path d="M1 1h21v3H1Z" fill="#4f87c0"/><path d="m8 16-6 6" stroke="#c49266" stroke-width="4"/><circle cx="13.500" cy="11" r="6.500" fill="#b8dcef" stroke="#8a9aa6" stroke-width="1.500"/>` },
  { name: "IntelliJ IDEA", open: true, glyph: svg`<path d="m1 3 9-3 6 6-12 17-4-6Z" fill="#e8467c"/><path d="m1 13 4-6 4 15-5 1Z" fill="#f08a3c"/><path d="m16 1 7 4v13l-9 5-8-3Z" fill="#2d8fea"/><rect x="4" y="4.500" width="15" height="15" fill="#000"/><text x="5.500" y="12.500" font-family="Open Sans, sans-serif" font-size="8" font-weight="700" fill="#fff">IJ</text><path d="M6 17h6" stroke="#fff" stroke-width="1.300"/>` },
  { name: "Chrome", open: true, glyph: svg`<circle cx="12" cy="12" r="12" fill="#dd4b3c"/><path d="M1.600 6A12 12 0 0 0 12 24l5-9H7Z" fill="#2f9e4d"/><path d="M12 24a12 12 0 0 0 10.800-17H12l5 8Z" fill="#fccb30"/><circle cx="12" cy="12" r="6" fill="#fff"/><circle cx="12" cy="12" r="4.800" fill="#2f7de8"/>` },
  { name: "WPS", glyph: svg`<path d="M0 5h5l4 11 2-5-2-6h4l3 8 3-5h-4l-1-3h10l-7 16h-3l-2-6-3 6H7Z" fill="#dd3b24"/>` },
  { name: "VS Code", open: true, glyph: svg`<path d="m17 0 6.500 3v18L17 24 6 13.500 2.500 17 0 15.500v-7L2.500 7 6 10.500Zm0 7-6 5 6 5Z" fill="#2589d0"/><path d="m17 0 6.500 3v18L17 24Z" fill="#45aaf0"/><path d="M0 15.500 17 0v7L2.500 17Z" fill="#1c6fb0"/>` },
  { name: "Xmind", open: true, glyph: svg`<rect width="24" height="24" rx="3" fill="#e0432e"/><path d="M4 10c5 0 6-1 7-5l3 1c0 4 0 5 6 4v3c-5 0-6 1-7 6l-3-1c0-5-1-6-6-5Z" fill="#fff"/><path d="m9.500 8.500 5 7" stroke="#e0432e" stroke-width="2"/>` },
  { name: "窗口", open: true, glyph: svg`<rect x="1" y="3" width="22" height="18" fill="#e9eeee" stroke="#b9c0c0"/><path d="M3 7h11v12H3Z" fill="#4f9a92"/><path d="M5 9h7v8H5Z" fill="#77b8a8"/><path d="M16 8h5m-5 4h5m-5 4h5" stroke="#c4cccc" stroke-width="1.500"/>` },
];

@customElement("task-bar")
class TaskBar extends LitElement {
  static styles = [base, css`
    :host { display: flex; align-items: stretch; height: 40px; background: #3b2411; color: #fff; }
    .apps { display: flex; gap: 1px; }
    .apps button { width: 48px; }
    .apps button.active { background: #834e1d; box-shadow: inset 0 -2px #f8cda8; }
    .apps button.open { background: linear-gradient(#f8cda8, #f8cda8) center bottom / 40px 2px no-repeat; }
    .tray { margin-left: auto; display: flex; align-items: center; padding-right: 3px; font-size: 16px; line-height: 20px; }
    .tray button { width: 24px; height: 40px; }
    .tray .ime { width: 20px; }
    .tray .pin { width: 16px; height: 16px; margin: 0 9px 0 12px; background: #fff; color: #111; font-size: 13px; font-weight: 700; }
    .tray .notes { position: relative; width: 44px; }
    .badge { position: absolute; right: 5px; bottom: 4px; width: 16px; height: 16px; border-radius: 50%; background: #6b4420; border: 1px solid #b08a63; font-size: 12px; line-height: 14px; text-align: center; }
    .edge { width: 1px; height: 100%; margin-left: 6px; background: #7a6350; }
  `];
  render() {
    return html`
      <div class="apps">${apps.map((a) => html`<button aria-label=${a.name} class=${classMap({ open: !!a.open, active: !!a.active })}>${icon(24, a.glyph, 24)}</button>`)}</div>
      <div class="tray">
        <button aria-label="显示隐藏的图标">${icon(13, svg`<path d="m1 12 7-7 7 7" stroke="#fff" stroke-width="1.500"/>`)}</button>
        <button aria-label="OBS">${icon(16, svg`<circle cx="8" cy="8" r="7.300" fill="#17151a" stroke="#ddd"/><path d="M8 7c-3-1-3-4-1-5M9 8c3-2 5 0 5 2M8 9c1 3-1 5-4 4" stroke="#ddd" stroke-width="1.500"/><circle cx="3.500" cy="12" r="3.300" fill="#e01f1f"/>`)}</button>
        <button aria-label="网络">${icon(16, svg`<path d="M5 3.500h10.500v8H5M10 11.500v3M6 14.500h8M.5 1.500h4v4h-4ZM2.500 5.500v6" stroke="#fff" stroke-width="1.200"/>`)}</button>
        <button aria-label="音量">${icon(16, svg`<path d="M.8 5.500h2.700L7 2v12l-3.500-3.500H.8Z" stroke="#fff" stroke-width="1.100"/><path d="M9 5.500c1.500 1.500 1.500 3.500 0 5M11 3.500c2.500 2.500 2.500 6.500 0 9" stroke="#fff" stroke-width="1.100"/><path d="M13 1.500c3.500 4 3.500 9 0 13" stroke="#8a7766"/>`)}</button>
        <button class="ime">英</button>
        <button class="pin">拼</button>
        <button class="notes" aria-label="通知">${icon(17, svg`<path d="M0 1h16v12H8l-3 3v-3H0Z" fill="#fff"/><path d="M3 4.500h10M3 7h10M3 9.500h7" stroke="#3b2411"/>`)}<span class="badge">3</span></button>
        <i class="edge"></i>
      </div>`;
  }
}

/* ---------- desktop ---------- */

@customElement("app-root")
class AppRoot extends LitElement {
  static styles = css`
    :host { position: relative; display: flex; flex-direction: column; height: 100vh; overflow: hidden; background: #f7f7f7; font-family: "Open Sans", "Noto Sans CJK SC", sans-serif; }
    .view { flex: 1; min-height: 0; display: grid; grid-template-columns: minmax(0, 1fr) 43px; grid-template-rows: minmax(0, 1fr); padding-left: 4px; }
    .main { display: grid; grid-template-rows: auto minmax(0, 1fr); }
    .gap { height: 4px; background: #f6f0ea; }
    .pointer { position: absolute; z-index: 5; left: 939px; top: 522px; }
  `;
  render() {
    return html`
      <browser-chrome></browser-chrome>
      <div class="view">
        <div class="main"><bookmark-bar></bookmark-bar><profile-page></profile-page></div>
        <side-rail></side-rail>
      </div>
      <div class="gap"></div>
      <task-bar></task-bar>
      <svg class="pointer" width="12" height="20" viewBox="0 0 12 20" aria-hidden="true"><path d="M.5 1v15l3.500-3.300 2.300 5.600 2.300-1-2.300-5.300h4.900Z" fill="#fff" stroke="#222" /></svg>`;
  }
}
